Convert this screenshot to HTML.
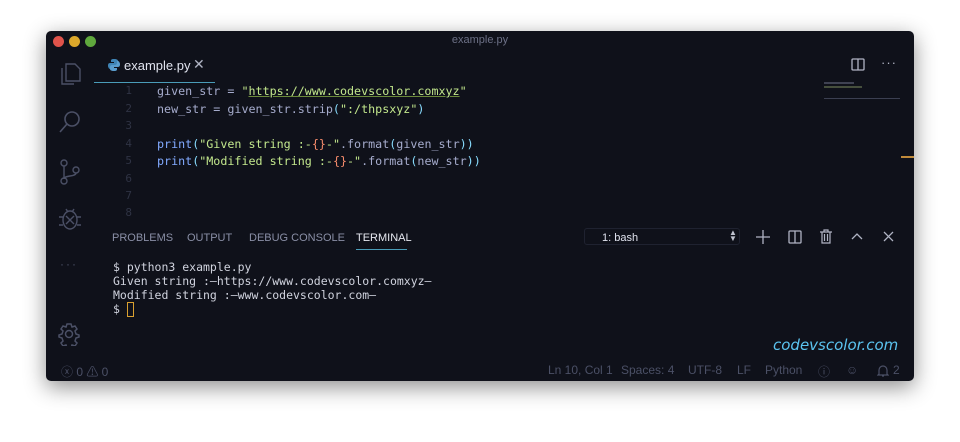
<!DOCTYPE html>
<html><head><meta charset="utf-8"><style>
*{margin:0;padding:0;box-sizing:border-box}
body{width:960px;height:442px;background:#fff;position:relative;overflow:hidden;font-family:"Liberation Sans",sans-serif}
.win{position:absolute;left:46px;top:31px;width:868px;height:350px;background:#0f111a;border-radius:5px;box-shadow:0 6px 22px rgba(0,0,0,.45);overflow:hidden}
.abs{position:absolute}
.dot{position:absolute;top:5px;width:11px;height:11px;border-radius:50%}
.mono{font-family:"DejaVu Sans Mono","Liberation Mono",monospace}
.code{position:absolute;left:111px;font-size:11.7px;white-space:pre;color:#a6accd}
.ln{position:absolute;left:70px;width:16px;text-align:right;font-size:11px;color:#2f3344}
.g{color:#c3e88d}.c{color:#89ddff}.o{color:#f78c6c}.b{color:#82aaff}
.tab{position:absolute;top:201px;font-size:11px;color:#8a8fa6}
.term{position:absolute;left:67px;font-size:11.5px;color:#d0d3de;white-space:pre}
.sb{position:absolute;top:332px;font-size:12px;color:#4b5066}
svg{position:absolute}
</style></head><body>
<div class="win">
<div class="dot" style="left:7px;background:#e0534b"></div>
<div class="dot" style="left:23px;background:#dca82b"></div>
<div class="dot" style="left:39px;background:#5fa83d"></div>
<div class="abs" style="left:0;right:0;top:3px;text-align:center;font-size:11px;color:#6c7086">example.py</div>

<svg style="left:12px;top:30px" width="24" height="26" viewBox="0 0 24 26" fill="none" stroke="#4b5066" stroke-width="1.4"><path d="M8 3h9l5 5v12H8z M4 7v16h12"/></svg>
<svg style="left:12px;top:78px" width="24" height="26" viewBox="0 0 24 26" fill="none" stroke="#4b5066" stroke-width="1.6"><circle cx="14" cy="10" r="7"/><path d="M9 15l-7 8"/></svg>
<svg style="left:12px;top:128px" width="24" height="26" viewBox="0 0 24 26" fill="none" stroke="#4b5066" stroke-width="1.4"><circle cx="6" cy="4" r="3"/><circle cx="6" cy="22" r="3"/><circle cx="18" cy="11" r="3"/><path d="M6 7v12M18 14c0 4-12 2-12 6"/></svg>
<svg style="left:11px;top:174px" width="26" height="28" viewBox="0 0 26 28" fill="none" stroke="#4b5066" stroke-width="1.4"><ellipse cx="13" cy="15" rx="7" ry="9"/><path d="M9 11l8 8M17 11l-8 8M2 12h4M20 12h4M2 20h4M20 20h4M9 4l2 3M17 4l-2 3"/></svg>
<div class="abs" style="left:14px;top:226px;color:#4b5066;font-size:12px;letter-spacing:2px">···</div>
<svg style="left:11px;top:291px" width="24" height="24" viewBox="0 0 24 24" fill="none" stroke="#4b5066" stroke-width="1.5"><circle cx="12" cy="12" r="3.5"/><path d="M10 2h4l1 3 3-1 2 3-2 2 1 3 3 1v2l-3 1-1 3 2 2-2 3-3-1-1 3h-4l-1-3-3 1-2-3 2-2-1-3-3-1v-2l3-1 1-3-2-2 2-3 3 1z"/></svg>

<svg style="left:62px;top:28px" width="12" height="12" viewBox="0 0 12 12"><path d="M6 0C3 0 3 1 3 2v1h3v1H2C0 4 0 6 0 7s1 3 2 3h1V8c0-1 1-2 2-2h3c1 0 2-1 2-2V2C10 1 9 0 6 0z" fill="#3f84b5"/><path d="M6 12c3 0 3-1 3-2V9H6V8h4c2 0 2-2 2-3s-1-3-2-3H9v2c0 1-1 2-2 2H4c-1 0-2 1-2 2v2c0 1 1 2 4 2z" fill="#5a9ccc"/></svg>
<div class="abs" style="left:78px;top:27px;font-size:13px;color:#e0e3ee">example.py</div>
<div class="abs" style="left:147px;top:25px;font-size:14px;color:#b0b4c4">✕</div>
<div class="abs" style="left:48px;top:51px;width:121px;height:1px;background:#4a9cb8"></div>
<svg style="left:805px;top:27px" width="14" height="13" viewBox="0 0 14 13" fill="none" stroke="#b0b4c4" stroke-width="1.3"><rect x="1" y="1" width="12" height="11" rx="1"/><path d="M7 1v11"/></svg>
<div class="abs" style="left:835px;top:24px;color:#b0b4c4;font-size:13px;letter-spacing:1px">···</div>
<div class="abs" style="left:778px;top:51px;width:30px;height:2px;background:#5f6478;opacity:.6"></div>
<div class="abs" style="left:778px;top:55px;width:38px;height:2px;background:#6b7a55;opacity:.6"></div>
<div class="abs" style="left:778px;top:67px;width:76px;height:1px;background:#3b3f51"></div>
<div class="abs" style="left:855px;top:125px;width:13px;height:2px;background:#c08a3a"></div>

<div class="ln mono" style="top:53px">1</div>
<div class="ln mono" style="top:71px">2</div>
<div class="ln mono" style="top:88px">3</div>
<div class="ln mono" style="top:106px">4</div>
<div class="ln mono" style="top:123px">5</div>
<div class="ln mono" style="top:141px">6</div>
<div class="ln mono" style="top:158px">7</div>
<div class="ln mono" style="top:175px">8</div>
<div class="code mono" style="top:53px">given_str = <span class="g">"<span style="text-decoration:underline;text-decoration-color:#6b8a3a">https://www.codevscolor.comxyz</span>"</span></div>
<div class="code mono" style="top:71px">new_str = given_str.strip<span class="c">(</span><span class="g">":/thpsxyz"</span><span class="c">)</span></div>
<div class="code mono" style="top:106px"><span class="b">print</span><span class="c">(</span><span class="g">"Given string :-<span class="o">{}</span>-"</span>.format<span class="c">(</span>given_str<span class="c">))</span></div>
<div class="code mono" style="top:123px"><span class="b">print</span><span class="c">(</span><span class="g">"Modified string :-<span class="o">{}</span>-"</span>.format<span class="c">(</span>new_str<span class="c">))</span></div>

<div class="tab" style="left:66px">PROBLEMS</div>
<div class="tab" style="left:141px">OUTPUT</div>
<div class="tab" style="left:203px">DEBUG CONSOLE</div>
<div class="tab" style="left:310px;color:#e6e8f0">TERMINAL</div>
<div class="abs" style="left:310px;top:218px;width:51px;height:1px;background:#4a9cb8"></div>
<div class="abs" style="left:538px;top:197px;width:156px;height:17px;border:1px solid #1f2230;border-radius:3px"></div>
<div class="abs" style="left:556px;top:201px;font-size:11px;color:#e0e3ee">1: bash</div>
<div class="abs" style="left:683px;top:199px;font-size:8px;color:#c0c4d0;line-height:6px">▲<br>▼</div>
<svg style="left:710px;top:199px" width="14" height="14" viewBox="0 0 14 14" stroke="#b0b4c4" stroke-width="1.3"><path d="M7 0v14M0 7h14"/></svg>
<svg style="left:742px;top:199px" width="14" height="14" viewBox="0 0 14 14" fill="none" stroke="#b0b4c4" stroke-width="1.3"><rect x="1" y="1" width="12" height="12" rx="1"/><path d="M7 1v12"/></svg>
<svg style="left:774px;top:198px" width="12" height="15" viewBox="0 0 12 15" fill="none" stroke="#b0b4c4" stroke-width="1.2"><path d="M0 3h12M4 3V1h4v2M2 3v11h8V3M4.5 5v7M7.5 5v7"/></svg>
<svg style="left:805px;top:201px" width="12" height="8" viewBox="0 0 12 8" fill="none" stroke="#b0b4c4" stroke-width="1.3"><path d="M1 7l5-5 5 5"/></svg>
<svg style="left:837px;top:200px" width="11" height="11" viewBox="0 0 11 11" stroke="#b0b4c4" stroke-width="1.3"><path d="M1 1l9 9M10 1l-9 9"/></svg>

<div class="term mono" style="top:229px">$ python3 example.py</div>
<div class="term mono" style="top:243px">Given string :–https://www.codevscolor.comxyz–</div>
<div class="term mono" style="top:257px">Modified string :–www.codevscolor.com–</div>
<div class="term mono" style="top:271px">$ </div>
<div class="abs" style="left:81px;top:271px;width:7px;height:15px;border:1px solid #d9a030"></div>

<div class="abs" style="left:727px;top:305px;font-family:'Comic Sans MS','DejaVu Sans',cursive;font-style:italic;font-size:15px;color:#5bc4f0">codevscolor.com</div>

<div class="sb" style="left:15px">ⓧ 0 ⚠ 0</div>
<div class="sb" style="left:502px">Ln 10, Col 1</div>
<div class="sb" style="left:575px">Spaces: 4</div>
<div class="sb" style="left:642px">UTF-8</div>
<div class="sb" style="left:691px">LF</div>
<div class="sb" style="left:719px">Python</div>
<div class="sb" style="left:772px">ⓘ</div>
<div class="sb" style="left:800px">☺</div>
<svg style="left:831px;top:333px" width="12" height="13" viewBox="0 0 12 13" fill="none" stroke="#4b5066" stroke-width="1.2"><path d="M2 10V6a4 4 0 018 0v4l1 1H1zM5 12h2"/></svg>
<div class="sb" style="left:847px">2</div>
</div>
</body></html>
